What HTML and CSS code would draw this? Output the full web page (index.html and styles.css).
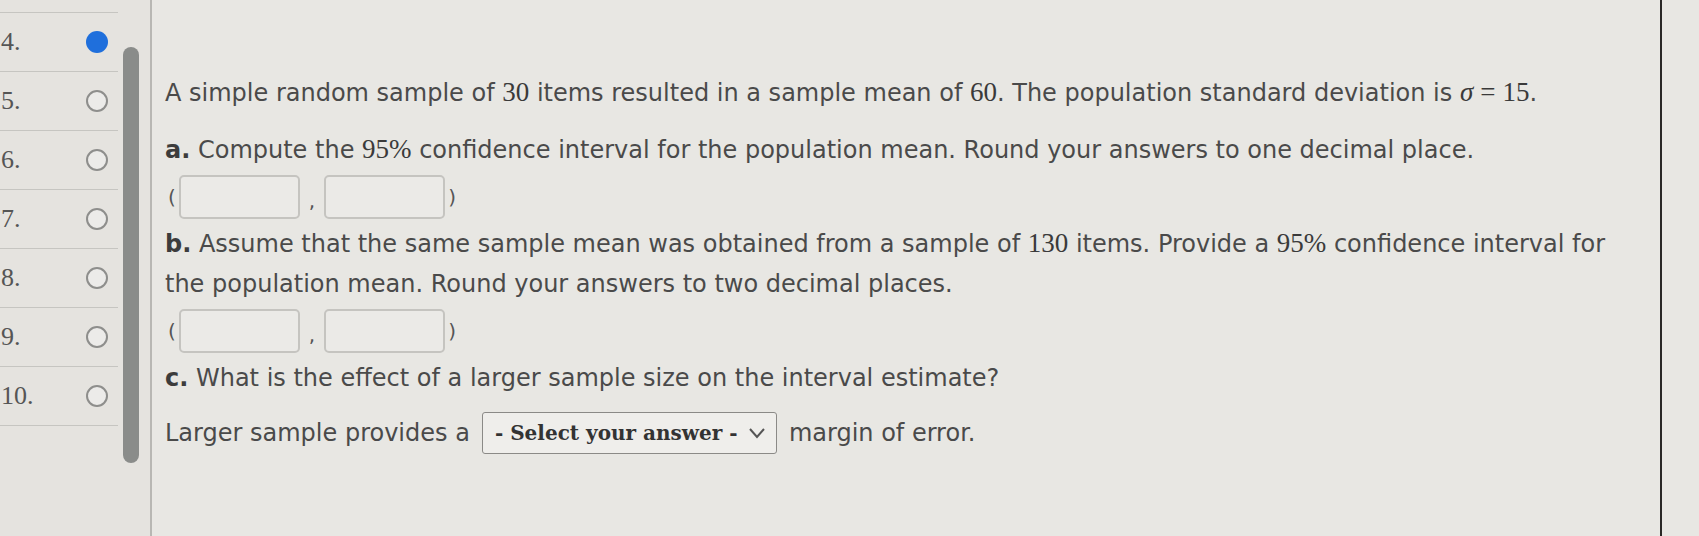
FILE: index.html
```html
<!DOCTYPE html>
<html lang="en">
<head>
  <meta charset="UTF-8">
  <meta name="viewport" content="width=device-width, initial-scale=1.0">
  <title>Question 4</title>
  <link rel="stylesheet" href="styles.css">
</head>
<body>
  <div class="page">
    <nav class="nav">
      <ul class="nav-list">
        <li class="nav-item"><span class="num">4.</span><span class="dot active"></span></li>
        <li class="nav-item"><span class="num">5.</span><span class="dot"></span></li>
        <li class="nav-item"><span class="num">6.</span><span class="dot"></span></li>
        <li class="nav-item"><span class="num">7.</span><span class="dot"></span></li>
        <li class="nav-item"><span class="num">8.</span><span class="dot"></span></li>
        <li class="nav-item"><span class="num">9.</span><span class="dot"></span></li>
        <li class="nav-item"><span class="num">10.</span><span class="dot"></span></li>
      </ul>
      <div class="nav-track"><div class="nav-thumb"></div></div>
    </nav>

    <main class="main">
      <p class="stem">A simple random sample of <span class="m">30</span> items resulted in a sample mean of <span class="m">60</span>. The population standard deviation is <span class="m"><i>σ</i><span class="eq">=</span>15</span>.</p>

      <p class="part"><b>a.</b> Compute the <span class="m">95%</span> confidence interval for the population mean. Round your answers to one decimal place.</p>
      <div class="interval">
        <span class="paren">(</span>
        <input class="box" type="text">
        <span class="comma">,</span>
        <input class="box" type="text">
        <span class="paren">)</span>
      </div>

      <p class="part"><b>b.</b> Assume that the same sample mean was obtained from a sample of <span class="m">130</span> items. Provide a <span class="m">95%</span> confidence interval for<br>the population mean. Round your answers to two decimal places.</p>
      <div class="interval">
        <span class="paren">(</span>
        <input class="box" type="text">
        <span class="comma">,</span>
        <input class="box" type="text">
        <span class="paren">)</span>
      </div>

      <p class="part"><b>c.</b> What is the effect of a larger sample size on the interval estimate?</p>
      <p class="answer">Larger sample provides a
        <label class="pick">
          <select class="pick-select">
            <option>- Select your answer -</option>
            <option>smaller</option>
            <option>larger</option>
          </select>
          <svg class="chev" width="18" height="12" viewBox="0 0 18 12"><path d="M2 2 L9 10 L16 2" fill="none" stroke="#555" stroke-width="2"/></svg>
        </label>
        margin of error.</p>
    </main>
  </div>
</body>
</html>
```

FILE: styles.css
```css
body {
  margin: 0;
  background: #e8e7e3;
  font-family: "DejaVu Sans", Verdana, sans-serif;
  color: #4a4a4a;
  overflow: hidden;
}

.page {
  display: flex;
  height: 536px;
}

/* question list on the left */
.nav {
  display: flex;
  width: 152px;
  flex: 0 0 152px;
  border-right: 2px solid #b8b7b3;
  box-sizing: border-box;
  background: #e5e3df;
}

.nav-list {
  list-style: none;
  margin: 12px 0 0;
  padding: 0;
  width: 118px;
  border-top: 1px solid #c6c5c1;
  align-self: flex-start;
}

.nav-item {
  display: flex;
  align-items: center;
  justify-content: space-between;
  height: 58px;
  border-bottom: 1px solid #c6c5c1;
  padding-right: 10px;
}

.num {
  font-family: "Liberation Serif", "Times New Roman", serif;
  font-size: 26px;
  color: #555;
  margin-left: 1px;
}

.dot {
  width: 18px;
  height: 18px;
  border: 2px solid #8e8e8c;
  border-radius: 50%;
  background: #ecebe9;
}

.dot.active {
  width: 22px;
  height: 22px;
  border: none;
  background: #1f6fdc;
}

.nav-track {
  flex: 1;
  padding: 47px 0 0 5px;
}

.nav-thumb {
  width: 16px;
  height: 416px;
  border-radius: 8px;
  background: #8a8c8a;
}

/* question body */
.main {
  width: 1510px;
  flex: 0 0 1510px;
  box-sizing: border-box;
  padding: 73px 40px 0 13px;
  border-right: 2px solid #2a2826;
  font-size: 24px;
  line-height: 40px;
}

.main p {
  margin: 0;
}

.stem {
  margin-bottom: 17px !important;
}

.main b {
  color: #3c3c3c;
}

.m {
  font-family: "Liberation Serif", "Times New Roman", serif;
  font-size: 27px;
  line-height: 1;
  color: #3a3a3a;
}

.eq {
  margin: 0 7px;
}

.interval {
  display: flex;
  align-items: center;
  height: 46px;
  margin: 4px 0;
}

.paren,
.comma {
  font-size: 20px;
  color: #555;
}

.paren {
  margin: 0 3px;
}

.comma {
  margin: 8px 9px 0;
}

.box {
  width: 121px;
  height: 44px;
  box-sizing: border-box;
  border: 2px solid #c5c4c0;
  border-radius: 5px;
  background: #ebeae7;
}

.interval + .part {
  margin-top: 3px;
}

.answer {
  margin-top: 14px !important;
  display: flex;
  align-items: center;
  gap: 12px;
}

.pick {
  display: inline-flex;
  align-items: center;
  height: 40px;
  padding: 0 10px 0 8px;
  border: 1.5px solid #8b8a87;
  border-radius: 3px;
  background: #efeeeb;
}

.pick-select {
  appearance: none;
  border: none;
  background: transparent;
  font-family: "DejaVu Serif", Georgia, serif;
  font-weight: bold;
  font-size: 20px;
  color: #333;
  padding: 0 8px 0 4px;
}

.chev {
  margin-left: 2px;
}
```
